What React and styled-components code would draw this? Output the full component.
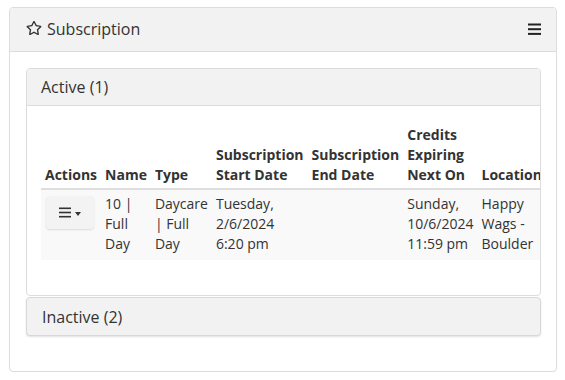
import React from "react";
import styled, { createGlobalStyle } from "styled-components";
import { FaRegStar } from "react-icons/fa";

const GlobalStyle = createGlobalStyle`
  body {
    margin: 0;
    font-family: "Open Sans", "Noto Sans", sans-serif;
    color: #333;
    background: #fff;
  }
`;

const rows = [
  {
    name: "10 | Full Day",
    type: "Daycare | Full Day",
    start: "Tuesday, 2/6/2024 6:20 pm",
    end: "",
    credits: "Sunday, 10/6/2024 11:59 pm",
    location: "Happy Wags - Boulder",
  },
];

const BarsIcon = ({ size = 13, thick = 2 }) => (
  <svg width={size} height={size - 1} viewBox="0 0 13 12">
    <rect x="0" y="0.5" width="13" height={thick} fill="#222" />
    <rect x="0" y="5.2" width="13" height={thick} fill="#222" />
    <rect x="0" y="9.9" width="13" height={thick} fill="#222" />
  </svg>
);

const Subscription = () => {
  return (
    <Page>
      <GlobalStyle />
      <Panel>
        <Heading>
          <Title>
            <FaRegStar size={16} />
            Subscription
          </Title>
          <BarsIcon />
        </Heading>
        <Body>
          <SubPanel>
            <SubHeading>Active (1)</SubHeading>
            <SubBody>
              <Table>
                <thead>
                  <tr>
                    <th>Actions</th>
                    <th>Name</th>
                    <th>Type</th>
                    <th>Subscription Start Date</th>
                    <th>Subscription End Date</th>
                    <th>Credits Expiring Next On</th>
                    <th>Location</th>
                  </tr>
                </thead>
                <tbody>
                  {rows.map((r, i) => (
                    <tr key={i}>
                      <td>
                        <ActionButton>
                          <svg width="13" height="11" viewBox="0 0 13 11">
                            <rect x="0" y="0.5" width="12" height="1.6" fill="#333" />
                            <rect x="0" y="4.7" width="12" height="1.6" fill="#333" />
                            <rect x="0" y="8.9" width="12" height="1.6" fill="#333" />
                          </svg>
                          <Caret />
                        </ActionButton>
                      </td>
                      <td>{r.name}</td>
                      <td>{r.type}</td>
                      <td>{r.start}</td>
                      <td>{r.end}</td>
                      <td>{r.credits}</td>
                      <td>{r.location}</td>
                    </tr>
                  ))}
                </tbody>
              </Table>
            </SubBody>
          </SubPanel>
          <Collapsed>Inactive (2)</Collapsed>
        </Body>
      </Panel>
    </Page>
  );
};

const Page = styled.div`
  padding: 7px 8px 8px 9px;
`;

const Panel = styled.div`
  border: 1px solid #dcdcdc;
  border-radius: 4px;
  background: #fff;
  overflow: hidden;
`;

const Heading = styled.div`
  height: 44px;
  padding: 0 15px 2px 16px;
  box-sizing: border-box;
  display: flex;
  align-items: center;
  justify-content: space-between;
  background: #f2f2f2;
  border-bottom: 1px solid #dcdcdc;
`;

const Title = styled.div`
  display: flex;
  align-items: center;
  gap: 5px;
  font-size: 16px;
  color: #333;
  svg {
    color: #333;
    margin-top: -1px;
  }
`;

const Body = styled.div`
  padding: 16px 15px 35px 16px;
`;

const SubPanel = styled.div`
  border: 1px solid #dcdcdc;
  border-radius: 4px;
  overflow: hidden;
`;

const SubHeading = styled.div`
  height: 36px;
  padding: 0 14px;
  display: flex;
  align-items: center;
  font-size: 16px;
  background: #f2f2f2;
  border-bottom: 1px solid #dcdcdc;
`;

const SubBody = styled.div`
  padding: 14px 0 15px 14px;
`;

const Table = styled.table`
  width: 1px;
  border-collapse: collapse;
  margin-bottom: 20px;
  font-size: 14px;
  line-height: 20px;
  th {
    font-weight: 700;
    text-align: left;
    vertical-align: bottom;
    padding: 5px 4px 3px;
    border-bottom: 2px solid #dedede;
  }
  td {
    vertical-align: top;
    padding: 4px 4px 6px;
    background: #f9f9f9;
  }
`;

const ActionButton = styled.div`
  width: 48px;
  height: 33px;
  margin-left: 1px;
  margin-top: 2px;
  display: flex;
  align-items: center;
  justify-content: center;
  gap: 3px;
  background: #f3f3f3;
  border-radius: 4px;
  box-shadow: 0 1px 2px rgba(0, 0, 0, 0.12);
`;

const Caret = styled.span`
  width: 0;
  height: 0;
  margin-top: 2px;
  border-left: 3.5px solid transparent;
  border-right: 3.5px solid transparent;
  border-top: 4px solid #333;
`;

const Collapsed = styled.div`
  height: 37px;
  margin-top: 1px;
  padding: 0 15px;
  display: flex;
  align-items: center;
  font-size: 16px;
  background: #f2f2f2;
  border: 1px solid #d8d8d8;
  border-radius: 4px;
  box-shadow: 0 1px 2px rgba(0, 0, 0, 0.12);
`;

export default Subscription;
